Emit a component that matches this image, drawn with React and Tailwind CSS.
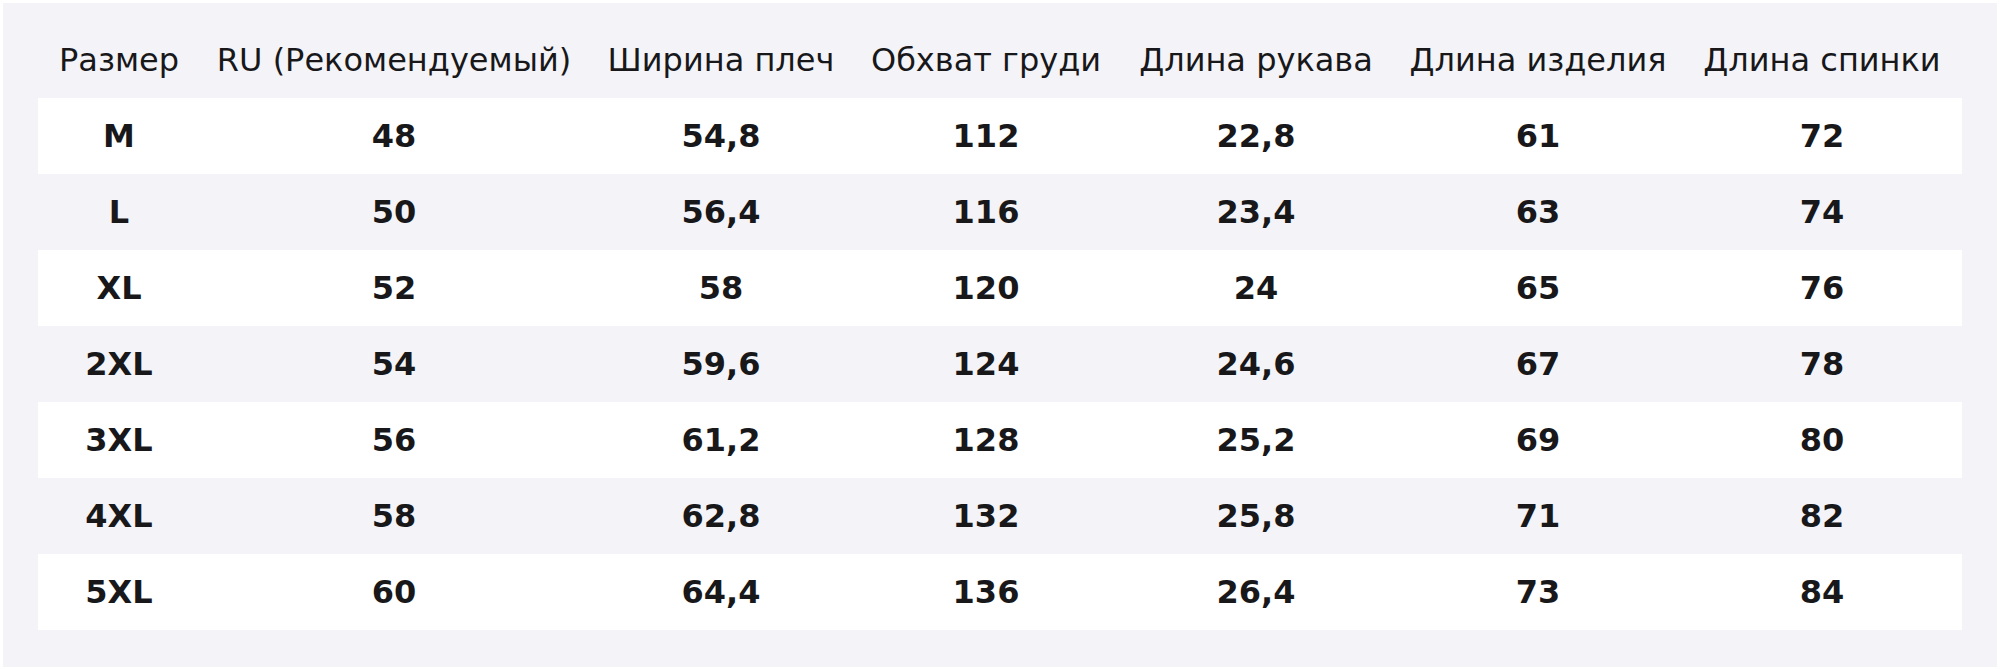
const COLUMNS = [
  { label: 'Размер', w: 'w-[162px]' },
  { label: 'RU (Рекомендуемый)', w: 'w-[388px]' },
  { label: 'Ширина плеч', w: 'w-[266px]' },
  { label: 'Обхват груди', w: 'w-[264px]' },
  { label: 'Длина рукава', w: 'w-[276px]' },
  { label: 'Длина изделия', w: 'w-[288px]' },
  { label: 'Длина спинки', w: 'w-[280px]' },
]

const ROWS = [
  ['M', '48', '54,8', '112', '22,8', '61', '72'],
  ['L', '50', '56,4', '116', '23,4', '63', '74'],
  ['XL', '52', '58', '120', '24', '65', '76'],
  ['2XL', '54', '59,6', '124', '24,6', '67', '78'],
  ['3XL', '56', '61,2', '128', '25,2', '69', '80'],
  ['4XL', '58', '62,8', '132', '25,8', '71', '82'],
  ['5XL', '60', '64,4', '136', '26,4', '73', '84'],
]

export default function App() {
  return (
    <div className="w-[2000px] h-[670px] bg-white p-[3px]" style={{ fontFamily: '"DejaVu Sans", sans-serif' }}>
      <div className="h-full bg-[#f4f4f8] px-[35px] pt-[19px] pb-[37px] text-[#18181b]">
        <table className="w-full table-fixed border-collapse text-[32px]">
          <thead>
            <tr className="h-[76px]">
              {COLUMNS.map(c => (
                <th key={c.label} className={`${c.w} font-normal text-center whitespace-nowrap p-0`}>{c.label}</th>
              ))}
            </tr>
          </thead>
          <tbody>
            {ROWS.map((r, i) => (
              <tr key={r[0]} className={`h-[76px] ${i % 2 === 0 ? 'bg-white' : 'bg-[#f4f4f8]'}`}>
                {r.map((v, j) => (
                  <td key={j} className="font-bold text-center p-0">{v}</td>
                ))}
              </tr>
            ))}
          </tbody>
        </table>
      </div>
    </div>
  )
}
